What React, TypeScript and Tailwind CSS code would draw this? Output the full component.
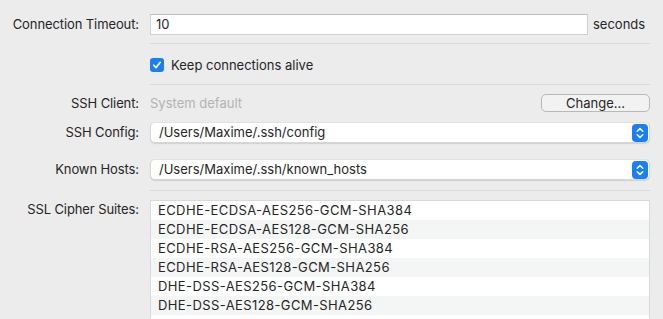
import React from "react";

const ciphers = [
  "ECDHE-ECDSA-AES256-GCM-SHA384",
  "ECDHE-ECDSA-AES128-GCM-SHA256",
  "ECDHE-RSA-AES256-GCM-SHA384",
  "ECDHE-RSA-AES128-GCM-SHA256",
  "DHE-DSS-AES256-GCM-SHA384",
  "DHE-DSS-AES128-GCM-SHA256",
  "",
];

const Label = ({ children }: { children: React.ReactNode }) => (
  <div className="w-[140px] shrink-0 text-right pr-[1px] text-[#262626] tracking-[-0.1px]">{children}</div>
);

const Stepper = () => (
  <div className="w-[16px] h-[18px] rounded-[4px] bg-[#1a7ff6] flex items-center justify-center">
    <svg width="8" height="12" viewBox="0 0 8 12" fill="none">
      <path d="M1.2 4.2 L4 1.6 L6.8 4.2" stroke="white" strokeWidth="1.5" strokeLinecap="round" strokeLinejoin="round" />
      <path d="M1.2 7.8 L4 10.4 L6.8 7.8" stroke="white" strokeWidth="1.5" strokeLinecap="round" strokeLinejoin="round" />
    </svg>
  </div>
);

const Popup = ({ value }: { value: string }) => (
  <div className="w-[500px] h-[21px] bg-white rounded-[5px] border border-[#d6d6d6] border-t-[#e2e2e2] shadow-[0_1px_1px_rgba(0,0,0,0.12)] flex items-center pl-[8px] pr-[1px]">
    <span className="flex-1 text-[#262626]">{value}</span>
    <Stepper />
  </div>
);

const Sep = () => <div className="ml-[150px] w-[500px] h-px bg-[#d9d9d9]" />;

export default function App() {
  return (
    <div
      className="w-[663px] h-[319px] overflow-hidden bg-[#ececec] text-[13px] leading-none pt-[14px]"
      style={{ fontFamily: "Inter, 'Liberation Sans', sans-serif" }}
    >
      {/* timeout */}
      <div className="flex items-center h-[21px] gap-[10px]">
        <Label>Connection Timeout:</Label>
        <div className="w-[438px] h-[21px] bg-white border border-[#cfcfcf] border-t-[#bdbdbd] flex items-center px-[5px] text-[#262626]">
          10
        </div>
        <span className="-ml-[5px] text-[#262626]">seconds</span>
      </div>

      <div className="mt-[8px]">
        <Sep />
      </div>

      <div className="flex items-center h-[20px] mt-[11px] pl-[150px] gap-[7px]">
        <div className="w-[14px] h-[14px] rounded-[3px] bg-[#1a7ff6] flex items-center justify-center">
          <svg width="10" height="10" viewBox="0 0 10 10" fill="none">
            <path d="M1.8 5.2 L4 7.6 L8.2 2.3" stroke="white" strokeWidth="1.7" strokeLinecap="round" strokeLinejoin="round" />
          </svg>
        </div>
        <span className="text-[#262626]">Keep connections alive</span>
      </div>

      <div className="mt-[9px]">
        <Sep />
      </div>

      {/* ssh client */}
      <div className="flex items-center h-[18px] mt-[9px] gap-[10px]">
        <Label>SSH Client:</Label>
        <span className="flex-1 text-[#b3b3b3]">System default</span>
        <button className="w-[109px] h-[18px] mr-[13px] rounded-[5px] border border-[#b8b8b8] bg-[#f2f2f2] text-[#262626] text-[13px] leading-none">
          Change...
        </button>
      </div>

      <div className="flex items-center h-[21px] mt-[10px] gap-[10px]">
        <Label>SSH Config:</Label>
        <Popup value="/Users/Maxime/.ssh/config" />
      </div>

      <div className="flex items-center h-[21px] mt-[16px] gap-[10px]">
        <Label>Known Hosts:</Label>
        <Popup value="/Users/Maxime/.ssh/known_hosts" />
      </div>

      <div className="mt-[10px]">
        <Sep />
      </div>

      <div className="flex items-start mt-[9px] gap-[10px]">
        <div className="h-[19px] flex items-center">
          <Label>SSL Cipher Suites:</Label>
        </div>
        <div className="w-[500px] bg-white border border-[#d9d9d9] border-b-0">
          {ciphers.map((c, i) => (
            <div
              key={i}
              className={`h-[19px] flex items-center pl-[7px] tracking-[0.4px] text-[#262626] ${i % 2 === 1 ? "bg-[#f4f5f5]" : "bg-white"}`}
            >
              {c}
            </div>
          ))}
        </div>
      </div>
    </div>
  );
}
